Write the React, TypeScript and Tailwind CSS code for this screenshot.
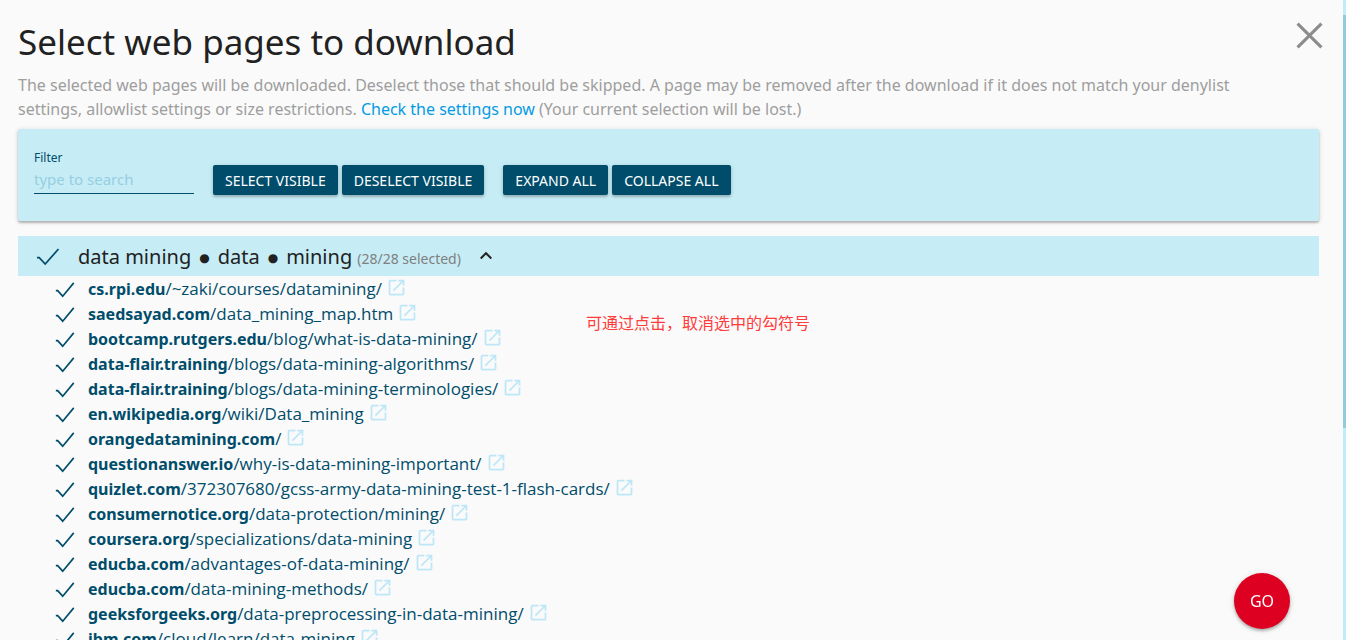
import React, { useState } from 'react';
import clsx from 'clsx';

const TOTAL_PAGES = 28;

const PAGES = [
  { domain: 'cs.rpi.edu', path: '/~zaki/courses/datamining/' },
  { domain: 'saedsayad.com', path: '/data_mining_map.htm' },
  { domain: 'bootcamp.rutgers.edu', path: '/blog/what-is-data-mining/' },
  { domain: 'data-flair.training', path: '/blogs/data-mining-algorithms/' },
  { domain: 'data-flair.training', path: '/blogs/data-mining-terminologies/' },
  { domain: 'en.wikipedia.org', path: '/wiki/Data_mining' },
  { domain: 'orangedatamining.com', path: '/' },
  { domain: 'questionanswer.io', path: '/why-is-data-mining-important/' },
  { domain: 'quizlet.com', path: '/372307680/gcss-army-data-mining-test-1-flash-cards/' },
  { domain: 'consumernotice.org', path: '/data-protection/mining/' },
  { domain: 'coursera.org', path: '/specializations/data-mining' },
  { domain: 'educba.com', path: '/advantages-of-data-mining/' },
  { domain: 'educba.com', path: '/data-mining-methods/' },
  { domain: 'geeksforgeeks.org', path: '/data-preprocessing-in-data-mining/' },
  { domain: 'ibm.com', path: '/cloud/learn/data-mining' },
];

const KEYWORDS = ['data mining', 'data', 'mining'];

const urlOf = (page: { domain: string; path: string }) => page.domain + page.path;

interface CheckProps {
  id: string;
  label: string;
  checked: boolean;
  large?: boolean;
  onChange: (checked: boolean) => void;
}

const Check = ({ id, label, checked, large, onChange }: CheckProps) => (
  <span className={clsx('relative shrink-0', large ? 'mt-0.5 h-[18px] w-6' : 'mt-[3px] h-4 w-5')}>
    <input
      id={id}
      type="checkbox"
      aria-label={label}
      checked={checked}
      onChange={e => onChange(e.target.checked)}
      className="absolute inset-0 cursor-pointer appearance-none"
    />
    <svg className={clsx('pointer-events-none h-full w-full', !checked && 'invisible')} viewBox="0 0 24 18" fill="none" stroke="#004d6b" strokeWidth={large ? 1.7 : 2} preserveAspectRatio="none">
      <path d="M1 9.7h2.2l6 6.3L22.5 1" />
    </svg>
  </span>
);

const ActionButton = ({ children, onClick }: { children: React.ReactNode; onClick: () => void }) => (
  <button
    type="button"
    onClick={onClick}
    className="h-[30px] cursor-pointer whitespace-nowrap rounded-xs bg-[#004d6b] px-3 pt-0.5 text-sm text-white uppercase shadow-[0_2px_2px_rgba(0,0,0,0.16),0_1px_5px_rgba(0,0,0,0.14)]"
  >
    {children}
  </button>
);

export default function App() {
  const [filter, setFilter] = useState('');
  const [open, setOpen] = useState(true);
  const [deselected, setDeselected] = useState<string[]>([]);

  const visible = PAGES.filter(p => urlOf(p).includes(filter.toLowerCase()));
  const visibleUrls = visible.map(urlOf);

  const selectVisible = () => setDeselected(deselected.filter(u => !visibleUrls.includes(u)));
  const deselectVisible = () => setDeselected([...new Set([...deselected, ...visibleUrls])]);

  const toggle = (url: string, checked: boolean) => {
    setDeselected(checked ? deselected.filter(u => u !== url) : [...deselected, url]);
  };

  return (
    <div className="flex h-screen overflow-hidden bg-[#fafafa] font-['Noto_Sans','Noto_Sans_CJK_SC',sans-serif]">
      <main className="min-w-0 flex-1 pr-6 pl-[18px]">
        <header className="flex items-start justify-between pt-4">
          <h1 className="text-[35px] leading-[52px] text-[#212121]">Select web pages to download</h1>
          <button type="button" aria-label="Close" className="mt-1.5 -mr-1 cursor-pointer text-[#8c8c8c]">
            <svg className="h-[27px] w-[27px]" viewBox="0 0 26 26" fill="none" stroke="currentColor" strokeWidth={3}>
              <path d="M1.5 1.5l23 23M24.5 1.5l-23 23" />
            </svg>
          </button>
        </header>

        <p className="mt-[5px] pr-8 text-base leading-6 text-[#9e9e9e]">
          The selected web pages will be downloaded. Deselect those that should be skipped. A page may be removed after the
          download if it does not match your denylist settings, allowlist settings or size restrictions.{' '}
          <a href="#settings" className="text-[#039be5]">Check the settings now</a> (Your current selection will be lost.)
        </p>

        <section className="mt-2 flex h-[92px] items-start rounded-xs bg-[#c6ecf5] px-4 pt-5 shadow-[0_2px_2px_rgba(0,0,0,0.2),0_1px_5px_rgba(0,0,0,0.16)]">
          <div className="flex w-40 flex-col">
            <label htmlFor="filter" className="text-xs leading-[18px] text-[#004d6b]">Filter</label>
            <input
              id="filter"
              type="text"
              placeholder="type to search"
              value={filter}
              onChange={e => setFilter(e.target.value)}
              className="h-[27px] w-full border-b border-[#004d6b] pb-0.5 text-[15px] text-[#004d6b] outline-none placeholder:text-[#96cfe2]"
            />
          </div>
          <div className="mt-4 ml-[19px] flex gap-[19px]">
            <div className="flex gap-1">
              <ActionButton onClick={selectVisible}>Select visible</ActionButton>
              <ActionButton onClick={deselectVisible}>Deselect visible</ActionButton>
            </div>
            <div className="flex gap-1">
              <ActionButton onClick={() => setOpen(true)}>Expand all</ActionButton>
              <ActionButton onClick={() => setOpen(false)}>Collapse all</ActionButton>
            </div>
          </div>
        </section>

        <section className="relative mt-[15px]">
          <div className="flex h-10 items-center bg-[#c6ecf5] pl-[18px]">
            <Check
              id="group"
              label="data mining"
              large
              checked={deselected.length === 0}
              onChange={checked => setDeselected(checked ? [] : PAGES.map(urlOf))}
            />
            <h2 className="mt-0.5 ml-[18px] text-xl leading-7 text-[#212121]">
              {KEYWORDS.map((word, i) => (
                <React.Fragment key={word}>
                  {i > 0 && <span className="mx-2 align-[2px] font-['DejaVu_Sans',sans-serif] text-xs">●</span>}
                  {word}
                </React.Fragment>
              ))}
            </h2>
            <span className="mt-1.5 ml-[5px] text-sm text-[#808080]">({TOTAL_PAGES - deselected.length}/{TOTAL_PAGES} selected)</span>
            <button type="button" aria-label="Toggle group" onClick={() => setOpen(!open)} className="ml-[19px] cursor-pointer">
              <svg className={clsx('h-3 w-3', !open && 'rotate-180')} viewBox="0 0 12 12" fill="none" stroke="#212121" strokeWidth={2}>
                <path d="M.7 8.5L6 3.2l5.3 5.3" />
              </svg>
            </button>
          </div>

          {open && (
            <ul className="pl-[37px]">
              {visible.map(page => {
                const url = urlOf(page);
                return (
                  <li key={url} className="flex h-[25px] items-center text-[#004d6b]">
                    <Check id={url} label={url} checked={!deselected.includes(url)} onChange={checked => toggle(url, checked)} />
                    <label htmlFor={url} className="ml-[13px] cursor-pointer font-['Open_Sans',sans-serif] text-[17px] leading-[25px] whitespace-nowrap">
                      <b className="font-['Noto_Sans',sans-serif] text-base leading-[25px] font-bold">{page.domain}</b>{page.path}
                    </label>
                    <a href={'#' + url} aria-label={'Open ' + url} className="mb-0.5 ml-1">
                      <svg className="h-[21px] w-[21px]" viewBox="0 0 24 24" fill="#bde7f7">
                        <path d="M19 19H5V5h7V3H5c-1.11 0-2 .9-2 2v14c0 1.1.89 2 2 2h14c1.1 0 2-.9 2-2v-7h-2v7zM14 3v2h3.59l-9.83 9.83 1.41 1.41L19 6.41V10h2V3h-7z" />
                      </svg>
                    </a>
                  </li>
                );
              })}
            </ul>
          )}

          <p className="absolute top-[75px] left-[568px] text-base leading-6 text-[#ff3b3b]">可通过点击，取消选中的勾符号</p>
        </section>
      </main>

      {/* Scroll track */}
      <div className="w-[3px] bg-[#bfecf7] pt-[15px]">
        <div className="h-[413px] bg-[#93cbdc]" />
      </div>

      <button type="button" className="fixed right-14 bottom-[11px] h-14 w-14 cursor-pointer rounded-full bg-[#dd0021] text-base text-white shadow-[0_2px_3px_rgba(0,0,0,0.25),0_1px_6px_rgba(0,0,0,0.14)]">
        GO
      </button>
    </div>
  );
}
